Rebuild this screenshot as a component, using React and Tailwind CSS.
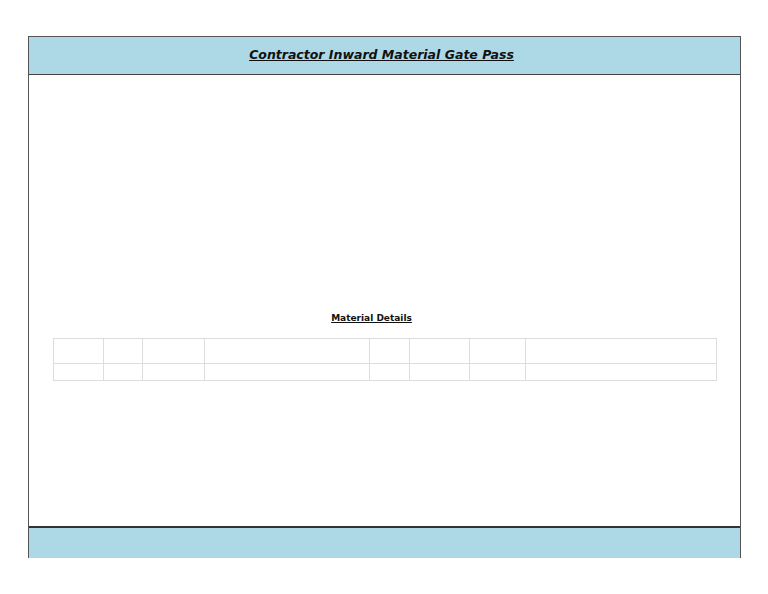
export default function App() {
  const cols = [50, 39, 62, 165, 40, 60, 56, 191];
  const rows = [25, 17];
  return (
    <div className="w-[768px] h-[594px] bg-white pt-[36px] pl-[28px]" style={{ fontFamily: '"Comic Sans MS", "DejaVu Sans", sans-serif' }}>
      <div className="w-[713px] h-[522px] border border-b-0 border-[#555] flex flex-col">
        <div className="h-[38px] bg-[#add8e6] border-b border-[#444] flex items-center justify-center">
          <span className="italic font-bold text-[12.5px] text-[#111] underline mr-[6px]">Contractor Inward Material Gate Pass</span>
        </div>
        <div className="flex-1 flex flex-col items-center pt-[237px]">
          <span className="text-[9px] font-bold underline text-[#111] mr-[26px]">Material Details</span>
          <table className="mt-[12px] border-collapse">
            <tbody>
              {rows.map((h, i) => (
                <tr key={i}>
                  {cols.map((w, j) => (
                    <td key={j} className="border border-[#ddd] p-0" style={{ width: w, height: h }}></td>
                  ))}
                </tr>
              ))}
            </tbody>
          </table>
        </div>
        <div className="h-[32px] bg-[#add8e6] border-t-2 border-[#333]"></div>
      </div>
    </div>
  );
}
